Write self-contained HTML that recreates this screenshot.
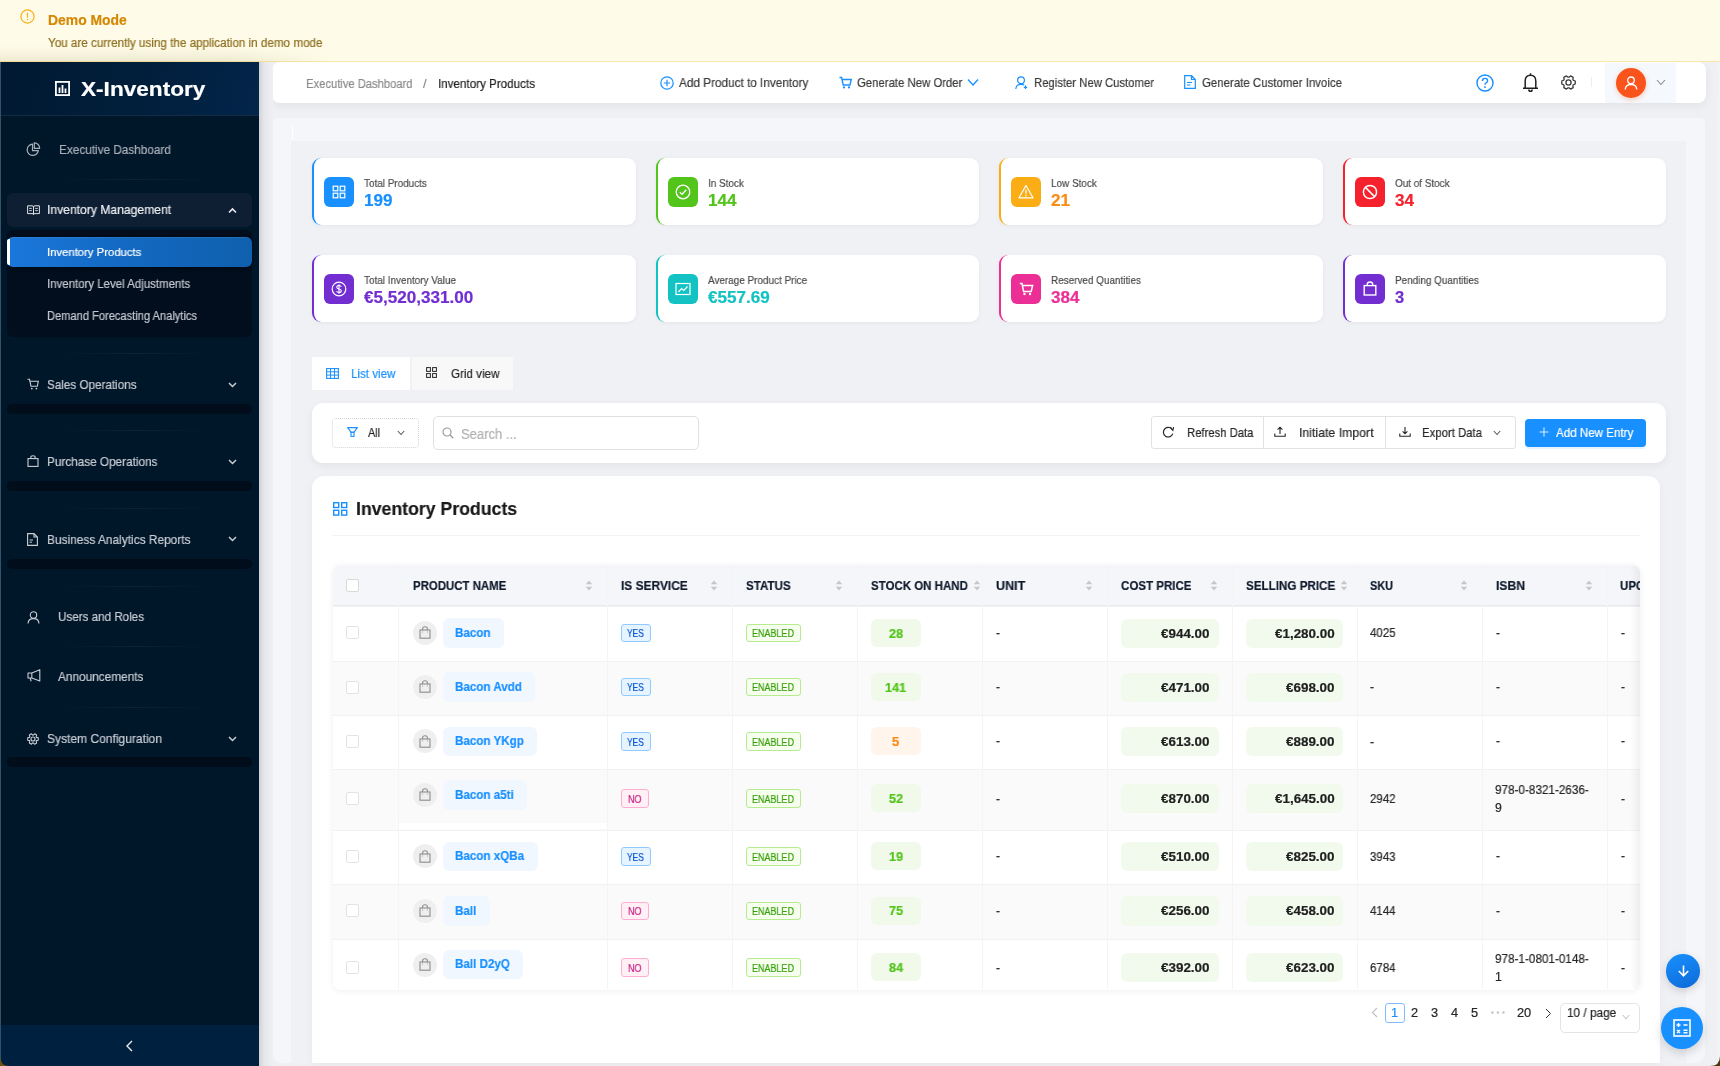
<!DOCTYPE html>
<html><head><meta charset="utf-8"><title>X-Inventory</title>
<style>
html,body{margin:0;padding:0;width:1720px;height:1066px;overflow:hidden;background:#eef0f3;}
#root{position:relative;width:1720px;height:1066px;overflow:hidden;font-family:"Liberation Sans",sans-serif;}
.t{position:absolute;white-space:nowrap;will-change:transform;-webkit-text-stroke:0.2px currentColor;font-family:"Liberation Sans",sans-serif;}
.b{position:absolute;}
.i{position:absolute;overflow:visible;}
</style></head><body><div id="root">
<div class="b" style="left:0px;top:0px;width:1720px;height:1066px;background:#eff0f4;"></div>
<div class="b" style="left:1718px;top:62px;width:2px;height:1004px;background:#f3f3f4;"></div>
<div class="b" style="left:272px;top:118px;width:1433px;height:945px;background:#f5f6fa;border-radius:5px 5px 10px 10px;"></div>
<div class="b" style="left:291px;top:141px;width:1395px;height:922px;background:#f0f1f5;"></div>
<div class="b" style="left:292px;top:125px;width:1px;height:15px;background:#ffffff;"></div>
<div class="b" style="left:272px;top:62px;width:1434px;height:41px;background:#fff;border-radius:8px;box-shadow:0 3px 10px rgba(0,0,0,0.06);"></div>
<div class="t" style="left:305.50px;top:76.50px;font-size:13px;line-height:13px;transform:scaleX(0.8619);transform-origin:0 0;color:#8a8a8a;">Executive Dashboard</div>
<div class="t" style="left:423.00px;top:76.50px;font-size:13px;line-height:13px;color:#8a8a8a;">/</div>
<div class="t" style="left:438.00px;top:76.50px;font-size:13px;line-height:13px;transform:scaleX(0.8947);transform-origin:0 0;color:#1f1f1f;">Inventory Products</div>
<svg class="i" style="left:660px;top:76px;" width="14" height="14" viewBox="0 0 14 14"><circle cx="7" cy="7" r="6.2" fill="none" stroke="#1890ff" stroke-width="1.2"/><path d="M7 3.8 V10.2 M3.8 7 H10.2" stroke="#1890ff" stroke-width="1.2"/></svg>
<div class="t" style="left:678.70px;top:76.40px;font-size:13px;line-height:13px;transform:scaleX(0.9045);transform-origin:0 0;color:#3a3a3a;">Add Product to Inventory</div>
<svg class="i" style="left:839px;top:76px;" width="13" height="13" viewBox="0 0 13 13"><path d="M0.5 1.5 H2.6 L4.2 9 H11 L12.2 3.5 H3.2" fill="none" stroke="#1890ff" stroke-width="1.4"/><circle cx="5" cy="11.4" r="1.1" fill="#1890ff"/><circle cx="10" cy="11.4" r="1.1" fill="#1890ff"/></svg>
<div class="t" style="left:856.50px;top:76.40px;font-size:13px;line-height:13px;transform:scaleX(0.8737);transform-origin:0 0;color:#3a3a3a;">Generate New Order</div>
<svg class="i" style="left:967px;top:78px;" width="12" height="9" viewBox="0 0 12 9"><path d="M1 1.5 L6 7 L11 1.5" fill="none" stroke="#1890ff" stroke-width="1.3"/></svg>
<svg class="i" style="left:1015px;top:76px;" width="13" height="14" viewBox="0 0 13 14"><circle cx="6" cy="4.2" r="3.4" fill="none" stroke="#1890ff" stroke-width="1.2"/><path d="M0.8 13 Q1 8.3 6 8.3 Q8 8.3 9.2 9" fill="none" stroke="#1890ff" stroke-width="1.2"/><path d="M10.5 9.5 V13 M8.8 11.3 H12.2" stroke="#1890ff" stroke-width="1.2"/></svg>
<div class="t" style="left:1033.70px;top:76.40px;font-size:13px;line-height:13px;transform:scaleX(0.8696);transform-origin:0 0;color:#3a3a3a;">Register New Customer</div>
<svg class="i" style="left:1184px;top:75px;" width="12" height="14" viewBox="0 0 12 14"><path d="M0.7 0.7 H7.5 L11.3 4.5 V13.3 H0.7 Z M7.5 0.7 V4.5 H11.3" fill="none" stroke="#1890ff" stroke-width="1.2"/><path d="M3 7.5 H8 M3 10 H6.5" stroke="#1890ff" stroke-width="1.1"/></svg>
<div class="t" style="left:1202.00px;top:76.40px;font-size:13px;line-height:13px;transform:scaleX(0.8806);transform-origin:0 0;color:#3a3a3a;">Generate Customer Invoice</div>
<svg class="i" style="left:1476px;top:74px;" width="18" height="18" viewBox="0 0 18 18"><circle cx="9" cy="9" r="8" fill="none" stroke="#1890ff" stroke-width="1.4"/><path d="M6.4 7 Q6.4 4.4 9 4.4 Q11.6 4.4 11.6 6.8 Q11.6 8.3 9.8 9.1 Q9 9.5 9 10.8" fill="none" stroke="#1890ff" stroke-width="1.4"/><circle cx="9" cy="13.2" r="0.9" fill="#1890ff"/></svg>
<svg class="i" style="left:1522px;top:72px;" width="17" height="21" viewBox="0 0 17 21"><path d="M8.5 1.2 V2.6 M3.2 16 V9 Q3.2 3.2 8.5 3.2 Q13.8 3.2 13.8 9 V16 M1 16.3 H16 M6.8 17.5 Q6.8 19.3 8.5 19.3 Q10.2 19.3 10.2 17.5" fill="none" stroke="#1f1f1f" stroke-width="1.5"/></svg>
<svg class="i" style="left:1561px;top:74.5px;" width="15" height="15" viewBox="0 0 15 15"><path d="M12.27 5.19 L14.23 5.99 L14.23 9.01 L12.27 9.81 L11.88 10.48 L12.17 12.58 L9.56 14.08 L7.89 12.79 L7.11 12.79 L5.44 14.08 L2.83 12.58 L3.12 10.48 L2.73 9.81 L0.77 9.01 L0.77 5.99 L2.73 5.19 L3.12 4.52 L2.83 2.42 L5.44 0.92 L7.11 2.21 L7.89 2.21 L9.56 0.92 L12.17 2.42 L11.88 4.52Z" fill="none" stroke="#3a3a3a" stroke-width="1.3" stroke-linejoin="round"/><circle cx="7.5" cy="7.5" r="2.55" fill="none" stroke="#3a3a3a" stroke-width="1.3"/></svg>
<div class="b" style="left:1591px;top:77px;width:1px;height:10px;background:#eeeeee;"></div>
<div class="b" style="left:1605px;top:63px;width:71px;height:40px;background:#f5f8fc;"></div>
<div class="b" style="left:1616px;top:68px;width:30px;height:30px;background:#fa541c;border-radius:50%;box-shadow:0 2px 5px rgba(250,84,28,0.25);"></div>
<svg class="i" style="left:1623px;top:75px;" width="16" height="16" viewBox="0 0 16 16"><circle cx="8" cy="5.3" r="3.3" fill="none" stroke="#fff" stroke-width="1.3"/><path d="M2.2 14.5 Q2.5 9.5 8 9.5 Q13.5 9.5 13.8 14.5" fill="none" stroke="#fff" stroke-width="1.3"/></svg>
<svg class="i" style="left:1656px;top:79px;" width="10" height="7" viewBox="0 0 10 7"><path d="M1 1 L5 5.5 L9 1" fill="none" stroke="#8c8c8c" stroke-width="1.1"/></svg>
<div class="b" style="left:312px;top:157.5px;width:323.5px;height:67px;background:#fff;border-radius:9px;border-left:2.5px solid #1890ff;box-sizing:border-box;box-shadow:0 1px 4px rgba(0,0,0,0.05);"></div>
<div class="b" style="left:324px;top:176.5px;width:30px;height:30px;background:#1890ff;border-radius:6px;"></div>
<svg class="i" style="left:332.0px;top:184.5px;" width="14" height="14" viewBox="0 0 14 14"><rect x="1.2" y="1.2" width="4.6" height="4.6" fill="none" stroke="#ffffff" stroke-width="1.2"/><rect x="1.2" y="8.2" width="4.6" height="4.6" fill="none" stroke="#ffffff" stroke-width="1.2"/><rect x="8.2" y="1.2" width="4.6" height="4.6" fill="none" stroke="#ffffff" stroke-width="1.2"/><rect x="8.2" y="8.2" width="4.6" height="4.6" fill="none" stroke="#ffffff" stroke-width="1.2"/></svg>
<div class="t" style="left:364.00px;top:177.50px;font-size:11.8px;line-height:11.8px;transform:scaleX(0.8415);transform-origin:0 0;color:#4a4a4a;">Total Products</div>
<div class="t" style="left:364.00px;top:191.50px;font-size:16.5px;line-height:16.5px;font-weight:700;transform:scaleX(1.0352);transform-origin:0 0;color:#1890ff;">199</div>
<div class="b" style="left:655.5px;top:157.5px;width:323.5px;height:67px;background:#fff;border-radius:9px;border-left:2.5px solid #52c41a;box-sizing:border-box;box-shadow:0 1px 4px rgba(0,0,0,0.05);"></div>
<div class="b" style="left:667.5px;top:176.5px;width:30px;height:30px;background:#52c41a;border-radius:6px;"></div>
<svg class="i" style="left:674.5px;top:183.5px;" width="16" height="16" viewBox="0 0 16 16"><circle cx="8" cy="8" r="6.8" fill="none" stroke="#ffffff" stroke-width="1.3"/><path d="M4.8 8.2 L7.1 10.4 L11.2 5.8" fill="none" stroke="#ffffff" stroke-width="1.3"/></svg>
<div class="t" style="left:707.50px;top:177.50px;font-size:11.8px;line-height:11.8px;transform:scaleX(0.8415);transform-origin:0 0;color:#4a4a4a;">In Stock</div>
<div class="t" style="left:707.50px;top:191.50px;font-size:16.5px;line-height:16.5px;font-weight:700;transform:scaleX(1.0352);transform-origin:0 0;color:#52c41a;">144</div>
<div class="b" style="left:999px;top:157.5px;width:323.5px;height:67px;background:#fff;border-radius:9px;border-left:2.5px solid #faad14;box-sizing:border-box;box-shadow:0 1px 4px rgba(0,0,0,0.05);"></div>
<div class="b" style="left:1011px;top:176.5px;width:30px;height:30px;background:#faad14;border-radius:6px;"></div>
<svg class="i" style="left:1018.0px;top:184.0px;" width="16" height="15" viewBox="0 0 16 15"><path d="M8 1.5 L15 13.8 H1 Z" fill="none" stroke="#ffffff" stroke-width="1.2" stroke-linejoin="round"/><path d="M8 5.8 V9.8" stroke="#ffffff" stroke-width="1.3"/><circle cx="8" cy="11.6" r="0.8" fill="#ffffff"/></svg>
<div class="t" style="left:1051.00px;top:177.50px;font-size:11.8px;line-height:11.8px;transform:scaleX(0.8415);transform-origin:0 0;color:#4a4a4a;">Low Stock</div>
<div class="t" style="left:1051.00px;top:191.50px;font-size:16.5px;line-height:16.5px;font-weight:700;transform:scaleX(1.0352);transform-origin:0 0;color:#fa8c16;">21</div>
<div class="b" style="left:1342.5px;top:157.5px;width:323.5px;height:67px;background:#fff;border-radius:9px;border-left:2.5px solid #f5222d;box-sizing:border-box;box-shadow:0 1px 4px rgba(0,0,0,0.05);"></div>
<div class="b" style="left:1354.5px;top:176.5px;width:30px;height:30px;background:#f5222d;border-radius:6px;"></div>
<svg class="i" style="left:1361.5px;top:183.5px;" width="16" height="16" viewBox="0 0 16 16"><circle cx="8" cy="8" r="6.6" fill="none" stroke="#ffffff" stroke-width="1.5"/><path d="M3.4 3.4 L12.6 12.6" stroke="#ffffff" stroke-width="1.5"/></svg>
<div class="t" style="left:1394.50px;top:177.50px;font-size:11.8px;line-height:11.8px;transform:scaleX(0.8415);transform-origin:0 0;color:#4a4a4a;">Out of Stock</div>
<div class="t" style="left:1394.50px;top:191.50px;font-size:16.5px;line-height:16.5px;font-weight:700;transform:scaleX(1.0352);transform-origin:0 0;color:#f5222d;">34</div>
<div class="b" style="left:312px;top:254.5px;width:323.5px;height:67px;background:#fff;border-radius:9px;border-left:2.5px solid #722ed1;box-sizing:border-box;box-shadow:0 1px 4px rgba(0,0,0,0.05);"></div>
<div class="b" style="left:324px;top:273.5px;width:30px;height:30px;background:#722ed1;border-radius:6px;"></div>
<svg class="i" style="left:331.0px;top:280.5px;" width="16" height="16" viewBox="0 0 16 16"><circle cx="8" cy="8" r="6.8" fill="none" stroke="#ffffff" stroke-width="1.2"/><path d="M10.3 5.8 Q9.8 4.5 8 4.5 Q5.8 4.5 5.8 6.2 Q5.8 7.5 8 8 Q10.3 8.5 10.3 9.9 Q10.3 11.5 8 11.5 Q6 11.5 5.6 10.1 M8 3.2 V12.8" fill="none" stroke="#ffffff" stroke-width="1.1"/></svg>
<div class="t" style="left:364.00px;top:274.50px;font-size:11.8px;line-height:11.8px;transform:scaleX(0.8415);transform-origin:0 0;color:#4a4a4a;">Total Inventory Value</div>
<div class="t" style="left:364.00px;top:288.50px;font-size:16.5px;line-height:16.5px;font-weight:700;transform:scaleX(1.0352);transform-origin:0 0;color:#722ed1;">€5,520,331.00</div>
<div class="b" style="left:655.5px;top:254.5px;width:323.5px;height:67px;background:#fff;border-radius:9px;border-left:2.5px solid #13c2c2;box-sizing:border-box;box-shadow:0 1px 4px rgba(0,0,0,0.05);"></div>
<div class="b" style="left:667.5px;top:273.5px;width:30px;height:30px;background:#13c2c2;border-radius:6px;"></div>
<svg class="i" style="left:674.5px;top:281.5px;" width="16" height="14" viewBox="0 0 16 14"><rect x="1" y="1.5" width="14" height="11" fill="none" stroke="#ffffff" stroke-width="1.2"/><path d="M3.5 10 L6.5 6.5 L8.8 8.5 L12.5 4.5" fill="none" stroke="#ffffff" stroke-width="1.2"/></svg>
<div class="t" style="left:707.50px;top:274.50px;font-size:11.8px;line-height:11.8px;transform:scaleX(0.8415);transform-origin:0 0;color:#4a4a4a;">Average Product Price</div>
<div class="t" style="left:707.50px;top:288.50px;font-size:16.5px;line-height:16.5px;font-weight:700;transform:scaleX(1.0352);transform-origin:0 0;color:#13c2c2;">€557.69</div>
<div class="b" style="left:999px;top:254.5px;width:323.5px;height:67px;background:#fff;border-radius:9px;border-left:2.5px solid #eb2f96;box-sizing:border-box;box-shadow:0 1px 4px rgba(0,0,0,0.05);"></div>
<div class="b" style="left:1011px;top:273.5px;width:30px;height:30px;background:#eb2f96;border-radius:6px;"></div>
<svg class="i" style="left:1018.5px;top:281.5px;" width="15" height="14" viewBox="0 0 15 14"><path d="M0.8 1.6 H3 L4.6 9.4 H12.2 L13.6 3.6 H3.6" fill="none" stroke="#ffffff" stroke-width="1.5"/><circle cx="5.5" cy="12" r="1.2" fill="#ffffff"/><circle cx="11" cy="12" r="1.2" fill="#ffffff"/></svg>
<div class="t" style="left:1051.00px;top:274.50px;font-size:11.8px;line-height:11.8px;transform:scaleX(0.8415);transform-origin:0 0;color:#4a4a4a;">Reserved Quantities</div>
<div class="t" style="left:1051.00px;top:288.50px;font-size:16.5px;line-height:16.5px;font-weight:700;transform:scaleX(1.0352);transform-origin:0 0;color:#eb2f96;">384</div>
<div class="b" style="left:1342.5px;top:254.5px;width:323.5px;height:67px;background:#fff;border-radius:9px;border-left:2.5px solid #722ed1;box-sizing:border-box;box-shadow:0 1px 4px rgba(0,0,0,0.05);"></div>
<div class="b" style="left:1354.5px;top:273.5px;width:30px;height:30px;background:#722ed1;border-radius:6px;"></div>
<svg class="i" style="left:1362.5px;top:281.0px;" width="14" height="15" viewBox="0 0 14 15"><rect x="1.2" y="4.6" width="11.6" height="9.4" fill="none" stroke="#ffffff" stroke-width="1.4"/><path d="M4.3 4.6 V3.2 Q4.3 1 7 1 Q9.7 1 9.7 3.2 V4.6" fill="none" stroke="#ffffff" stroke-width="1.3"/></svg>
<div class="t" style="left:1394.50px;top:274.50px;font-size:11.8px;line-height:11.8px;transform:scaleX(0.8415);transform-origin:0 0;color:#4a4a4a;">Pending Quantities</div>
<div class="t" style="left:1394.50px;top:288.50px;font-size:16.5px;line-height:16.5px;font-weight:700;color:#722ed1;">3</div>
<div class="b" style="left:312px;top:357px;width:97.5px;height:32.5px;background:#ffffff;"></div>
<div class="b" style="left:412px;top:357px;width:100.5px;height:32.5px;background:#f8f8f9;"></div>
<svg class="i" style="left:325.5px;top:367.5px;" width="13" height="11" viewBox="0 0 13 11"><rect x="0.6" y="0.6" width="11.8" height="9.8" fill="none" stroke="#1890ff" stroke-width="1.1"/><path d="M0.6 3.8 H12.4 M0.6 7.1 H12.4 M4.5 0.6 V10.4 M8.5 0.6 V10.4" stroke="#1890ff" stroke-width="1"/></svg>
<div class="t" style="left:351.25px;top:366.50px;font-size:13.2px;line-height:13.2px;transform:scaleX(0.8791);transform-origin:0 0;color:#1890ff;">List view</div>
<svg class="i" style="left:426px;top:367px;" width="11" height="11" viewBox="0 0 11 11"><rect x="0.6" y="0.6" width="3.8" height="3.8" fill="none" stroke="#262626" stroke-width="1"/><rect x="0.6" y="6.6" width="3.8" height="3.8" fill="none" stroke="#262626" stroke-width="1"/><rect x="6.6" y="0.6" width="3.8" height="3.8" fill="none" stroke="#262626" stroke-width="1"/><rect x="6.6" y="6.6" width="3.8" height="3.8" fill="none" stroke="#262626" stroke-width="1"/></svg>
<div class="t" style="left:450.75px;top:366.50px;font-size:13.2px;line-height:13.2px;transform:scaleX(0.8811);transform-origin:0 0;color:#262626;">Grid view</div>
<div class="b" style="left:312px;top:403px;width:1354px;height:60px;background:#fff;border-radius:11px;box-shadow:0 3px 10px rgba(0,0,0,0.06);"></div>
<div class="b" style="left:331.5px;top:418px;width:87.5px;height:30px;border:1px dotted #d6d6d6;border-radius:4px;box-sizing:border-box;"></div>
<svg class="i" style="left:346.5px;top:427px;" width="11" height="10" viewBox="0 0 11 10"><path d="M0.6 0.6 H10.4 L7 5.2 H4 Z" fill="none" stroke="#1890ff" stroke-width="1.1" stroke-linejoin="round"/><rect x="4" y="5.2" width="3" height="4.2" fill="none" stroke="#1890ff" stroke-width="1.1"/></svg>
<div class="t" style="left:367.50px;top:426.20px;font-size:13px;line-height:13px;transform:scaleX(0.8316);transform-origin:0 0;color:#262626;">All</div>
<svg class="i" style="left:397px;top:429.5px;" width="8" height="6" viewBox="0 0 8 6"><path d="M0.8 1 L4 4.5 L7.2 1" fill="none" stroke="#595959" stroke-width="1.1"/></svg>
<div class="b" style="left:432.5px;top:416px;width:266.5px;height:33.5px;border:1px solid #e0e0e0;border-radius:5px;box-sizing:border-box;background:#fff;"></div>
<svg class="i" style="left:442px;top:427px;" width="12" height="12" viewBox="0 0 12 12"><circle cx="5" cy="5" r="4" fill="none" stroke="#9a9a9a" stroke-width="1.2"/><path d="M8 8 L11.3 11.3" stroke="#9a9a9a" stroke-width="1.3"/></svg>
<div class="t" style="left:461.25px;top:427.00px;font-size:14px;line-height:14px;transform:scaleX(0.9304);transform-origin:0 0;color:#b0b0b0;">Search ...</div>
<div class="b" style="left:1151px;top:416px;width:364.5px;height:33px;border:1px solid #e2e2e2;border-radius:3px;box-sizing:border-box;"></div>
<div class="b" style="left:1263px;top:416px;width:1px;height:33px;background:#e2e2e2;"></div>
<div class="b" style="left:1384.5px;top:416px;width:1px;height:33px;background:#e2e2e2;"></div>
<svg class="i" style="left:1161.5px;top:426px;" width="12" height="12" viewBox="0 0 12 12"><path d="M10.6 4.2 A4.8 4.8 0 1 0 10.8 7.6" fill="none" stroke="#262626" stroke-width="1.2"/><path d="M8.3 1.2 L10.9 4.3 L11.6 1" fill="none" stroke="#262626" stroke-width="1.1"/></svg>
<div class="t" style="left:1186.50px;top:425.90px;font-size:13px;line-height:13px;transform:scaleX(0.8677);transform-origin:0 0;color:#262626;">Refresh Data</div>
<svg class="i" style="left:1273.5px;top:426px;" width="12" height="11" viewBox="0 0 12 11"><path d="M6 8 V1.2 M3.6 3.6 L6 1.2 L8.4 3.6 M0.8 7.5 V10.2 H11.2 V7.5" fill="none" stroke="#262626" stroke-width="1.1"/></svg>
<div class="t" style="left:1299.00px;top:425.90px;font-size:13px;line-height:13px;transform:scaleX(0.9469);transform-origin:0 0;color:#262626;">Initiate Import</div>
<svg class="i" style="left:1398.5px;top:426px;" width="12" height="11" viewBox="0 0 12 11"><path d="M6 1 V7.8 M3.6 5.4 L6 7.8 L8.4 5.4 M0.8 7.5 V10.2 H11.2 V7.5" fill="none" stroke="#262626" stroke-width="1.1"/></svg>
<div class="t" style="left:1421.50px;top:425.90px;font-size:13px;line-height:13px;transform:scaleX(0.8733);transform-origin:0 0;color:#262626;">Export Data</div>
<svg class="i" style="left:1493px;top:430px;" width="8" height="6" viewBox="0 0 8 6"><path d="M0.8 1 L4 4.5 L7.2 1" fill="none" stroke="#595959" stroke-width="1.1"/></svg>
<div class="b" style="left:1525px;top:418.5px;width:121px;height:28.5px;background:#1890ff;border-radius:4px;box-shadow:0 2px 0 rgba(5,145,255,0.1);"></div>
<svg class="i" style="left:1539px;top:427px;" width="10" height="10" viewBox="0 0 10 10"><path d="M5 0.5 V9.5 M0.5 5 H9.5" stroke="#cfe6ff" stroke-width="1.2"/></svg>
<div class="t" style="left:1555.70px;top:425.90px;font-size:13px;line-height:13px;transform:scaleX(0.8915);transform-origin:0 0;color:#ffffff;">Add New Entry</div>
<div class="b" style="left:312px;top:476px;width:1348px;height:587px;background:#fff;border-radius:12px 12px 0 0;box-shadow:0 2px 8px rgba(0,0,0,0.04);"></div>
<svg class="i" style="left:333px;top:502px;" width="15" height="14" viewBox="0 0 15 14"><rect x="0.7" y="0.7" width="5" height="4.8" fill="none" stroke="#1890ff" stroke-width="1.4"/><rect x="0.7" y="8.3" width="5" height="4.8" fill="none" stroke="#1890ff" stroke-width="1.4"/><rect x="8.7" y="0.7" width="5" height="4.8" fill="none" stroke="#1890ff" stroke-width="1.4"/><rect x="8.7" y="8.3" width="5" height="4.8" fill="none" stroke="#1890ff" stroke-width="1.4"/></svg>
<div class="t" style="left:355.50px;top:499.50px;font-size:18.6px;line-height:18.6px;font-weight:700;transform:scaleX(0.9511);transform-origin:0 0;color:#1a1a1a;">Inventory Products</div>
<div class="b" style="left:332px;top:534.5px;width:1308px;height:1px;background:#f3f3f3;"></div>
<div class="b" style="left:332.5px;top:565px;width:1307px;height:424.5px;border-radius:8px;overflow:hidden;box-shadow:0 1px 6px rgba(0,0,0,0.07);background:#fff;">
<div style="position:absolute;left:0;top:0;width:1307px;height:40px;background:#f5f6fa;border-bottom:1.5px solid #e9eaee;"></div>
<div style="position:absolute;left:0;top:41.0px;width:1307px;height:55.0px;background:#ffffff;border-top:1px solid #f2f2f2;box-sizing:border-box;"></div>
<div style="position:absolute;left:0;top:96.0px;width:1307px;height:54.4px;background:#fafafa;border-top:1px solid #f2f2f2;box-sizing:border-box;"></div>
<div style="position:absolute;left:0;top:150.4px;width:1307px;height:53.9px;background:#ffffff;border-top:1px solid #f2f2f2;box-sizing:border-box;"></div>
<div style="position:absolute;left:0;top:204.3px;width:1307px;height:61.1px;background:#fafafa;border-top:1px solid #f2f2f2;box-sizing:border-box;"></div>
<div style="position:absolute;left:0;top:265.4px;width:1307px;height:54.0px;background:#ffffff;border-top:1px solid #f2f2f2;box-sizing:border-box;"></div>
<div style="position:absolute;left:0;top:319.4px;width:1307px;height:54.6px;background:#fafafa;border-top:1px solid #f2f2f2;box-sizing:border-box;"></div>
<div style="position:absolute;left:0;top:374.0px;width:1307px;height:59.0px;background:#ffffff;border-top:1px solid #f2f2f2;box-sizing:border-box;"></div>
<div style="position:absolute;left:65.8px;top:0;width:1px;height:424px;background:#f4f4f4;"></div>
<div style="position:absolute;left:274.5px;top:0;width:1px;height:424px;background:#f4f4f4;"></div>
<div style="position:absolute;left:399.5px;top:0;width:1px;height:424px;background:#f4f4f4;"></div>
<div style="position:absolute;left:524.5px;top:0;width:1px;height:424px;background:#f4f4f4;"></div>
<div style="position:absolute;left:649.5px;top:0;width:1px;height:424px;background:#f4f4f4;"></div>
<div style="position:absolute;left:774.5px;top:0;width:1px;height:424px;background:#f4f4f4;"></div>
<div style="position:absolute;left:899.5px;top:0;width:1px;height:424px;background:#f4f4f4;"></div>
<div style="position:absolute;left:1024.5px;top:0;width:1px;height:424px;background:#f4f4f4;"></div>
<div style="position:absolute;left:1149.5px;top:0;width:1px;height:424px;background:#f4f4f4;"></div>
<div style="position:absolute;left:1274.5px;top:0;width:1px;height:424px;background:#f4f4f4;"></div>
<div style="position:absolute;left:66.5px;top:258px;width:208px;height:6px;background:#fff;"></div>
<div style="position:absolute;right:0;top:0;width:10px;height:424px;background:linear-gradient(90deg,rgba(0,0,0,0),rgba(0,0,0,0.05));"></div>
</div>
<div class="b" style="left:346.25px;top:578.5px;width:13px;height:13px;border:1px solid #d9d9d9;border-radius:2px;box-sizing:border-box;background:#fff;"></div>
<div class="t" style="left:412.50px;top:579.00px;font-size:13px;line-height:13px;font-weight:700;transform:scaleX(0.8785);transform-origin:0 0;color:#0f1a2b;">PRODUCT NAME</div>
<svg class="i" style="left:585px;top:580.0px;" width="8" height="11" viewBox="0 0 8 11"><path d="M4 0.5 L7.3 4.2 H0.7 Z" fill="#c7c7c7"/><path d="M4 10.5 L7.3 6.8 H0.7 Z" fill="#c7c7c7"/></svg>
<div class="t" style="left:620.75px;top:579.00px;font-size:13px;line-height:13px;font-weight:700;transform:scaleX(0.9177);transform-origin:0 0;color:#0f1a2b;">IS SERVICE</div>
<svg class="i" style="left:710px;top:580.0px;" width="8" height="11" viewBox="0 0 8 11"><path d="M4 0.5 L7.3 4.2 H0.7 Z" fill="#c7c7c7"/><path d="M4 10.5 L7.3 6.8 H0.7 Z" fill="#c7c7c7"/></svg>
<div class="t" style="left:745.50px;top:579.00px;font-size:13px;line-height:13px;font-weight:700;transform:scaleX(0.8911);transform-origin:0 0;color:#0f1a2b;">STATUS</div>
<svg class="i" style="left:835px;top:580.0px;" width="8" height="11" viewBox="0 0 8 11"><path d="M4 0.5 L7.3 4.2 H0.7 Z" fill="#c7c7c7"/><path d="M4 10.5 L7.3 6.8 H0.7 Z" fill="#c7c7c7"/></svg>
<div class="t" style="left:870.70px;top:579.00px;font-size:13px;line-height:13px;font-weight:700;transform:scaleX(0.8838);transform-origin:0 0;color:#0f1a2b;">STOCK ON HAND</div>
<svg class="i" style="left:972.5px;top:580.0px;" width="8" height="11" viewBox="0 0 8 11"><path d="M4 0.5 L7.3 4.2 H0.7 Z" fill="#c7c7c7"/><path d="M4 10.5 L7.3 6.8 H0.7 Z" fill="#c7c7c7"/></svg>
<div class="t" style="left:995.80px;top:579.00px;font-size:13px;line-height:13px;font-weight:700;transform:scaleX(0.9620);transform-origin:0 0;color:#0f1a2b;">UNIT</div>
<svg class="i" style="left:1085px;top:580.0px;" width="8" height="11" viewBox="0 0 8 11"><path d="M4 0.5 L7.3 4.2 H0.7 Z" fill="#c7c7c7"/><path d="M4 10.5 L7.3 6.8 H0.7 Z" fill="#c7c7c7"/></svg>
<div class="t" style="left:1120.50px;top:579.00px;font-size:13px;line-height:13px;font-weight:700;transform:scaleX(0.8863);transform-origin:0 0;color:#0f1a2b;">COST PRICE</div>
<svg class="i" style="left:1210px;top:580.0px;" width="8" height="11" viewBox="0 0 8 11"><path d="M4 0.5 L7.3 4.2 H0.7 Z" fill="#c7c7c7"/><path d="M4 10.5 L7.3 6.8 H0.7 Z" fill="#c7c7c7"/></svg>
<div class="t" style="left:1245.50px;top:579.00px;font-size:13px;line-height:13px;font-weight:700;transform:scaleX(0.8956);transform-origin:0 0;color:#0f1a2b;">SELLING PRICE</div>
<svg class="i" style="left:1340px;top:580.0px;" width="8" height="11" viewBox="0 0 8 11"><path d="M4 0.5 L7.3 4.2 H0.7 Z" fill="#c7c7c7"/><path d="M4 10.5 L7.3 6.8 H0.7 Z" fill="#c7c7c7"/></svg>
<div class="t" style="left:1370.40px;top:579.00px;font-size:13px;line-height:13px;font-weight:700;transform:scaleX(0.8385);transform-origin:0 0;color:#0f1a2b;">SKU</div>
<svg class="i" style="left:1460px;top:580.0px;" width="8" height="11" viewBox="0 0 8 11"><path d="M4 0.5 L7.3 4.2 H0.7 Z" fill="#c7c7c7"/><path d="M4 10.5 L7.3 6.8 H0.7 Z" fill="#c7c7c7"/></svg>
<div class="t" style="left:1495.50px;top:579.00px;font-size:13px;line-height:13px;font-weight:700;transform:scaleX(0.9334);transform-origin:0 0;color:#0f1a2b;">ISBN</div>
<svg class="i" style="left:1585px;top:580.0px;" width="8" height="11" viewBox="0 0 8 11"><path d="M4 0.5 L7.3 4.2 H0.7 Z" fill="#c7c7c7"/><path d="M4 10.5 L7.3 6.8 H0.7 Z" fill="#c7c7c7"/></svg>
<div class="b" style="left:1608px;top:570px;width:31.5px;height:30px;overflow:hidden;"><div style="position:absolute;left:-1608px;top:-570px;width:1720px;height:1066px;"><div class="t" style="left:1620.00px;top:579.00px;font-size:13px;line-height:13px;font-weight:700;transform:scaleX(0.8808);transform-origin:0 0;color:#0f1a2b;">UPC</div>
</div></div>
<div class="b" style="left:346.25px;top:626.4px;width:13px;height:13px;border:1px solid #e3e3e3;border-radius:2px;box-sizing:border-box;background:#fff;"></div>
<div class="b" style="left:412.5px;top:620.9px;width:24px;height:24px;background:#efefef;border-radius:50%;"></div>
<svg class="i" style="left:418.5px;top:626.1px;" width="12" height="13" viewBox="0 0 12 13"><rect x="1" y="4" width="10" height="8.2" fill="none" stroke="#8c8c8c" stroke-width="1.1"/><path d="M3.6 4 V2.8 Q3.6 0.8 6 0.8 Q8.4 0.8 8.4 2.8 V4" fill="none" stroke="#8c8c8c" stroke-width="1.1"/><path d="M3.6 5.6 V6.4 M8.4 5.6 V6.4" stroke="#8c8c8c" stroke-width="1"/></svg>
<div class="b" style="left:442.5px;top:618.1999999999999px;width:61.4991px;height:29.5px;background:#f1f7ff;border-radius:6px;"></div>
<div class="t" style="left:455.30px;top:625.70px;font-size:13.5px;line-height:13.5px;font-weight:700;transform:scaleX(0.8607);transform-origin:0 0;color:#1890ff;">Bacon</div>
<div class="b" style="left:621px;top:623.6999999999999px;width:30.2px;height:18.5px;background:#e6f4ff;border:1px solid #91caff;border-radius:3px;box-sizing:border-box;"></div>
<div class="t" style="left:627.40px;top:628.20px;font-size:11px;line-height:11px;transform:scaleX(0.7636);transform-origin:0 0;color:#0958d9;">YES</div>
<div class="b" style="left:746px;top:623.6999999999999px;width:54.7px;height:18.5px;background:#f6ffed;border:1px solid #b7eb8f;border-radius:3px;box-sizing:border-box;"></div>
<div class="t" style="left:752.30px;top:628.20px;font-size:11px;line-height:11px;transform:scaleX(0.8176);transform-origin:0 0;color:#389e0d;">ENABLED</div>
<div class="b" style="left:871px;top:618.6999999999999px;width:50px;height:28px;background:#f0f9ea;border-radius:6px;"></div>
<div class="t" style="left:889.01px;top:626.50px;font-size:13px;line-height:13px;font-weight:700;transform:scaleX(0.9692);transform-origin:0 0;color:#52c41a;">28</div>
<div class="t" style="left:995.50px;top:626.90px;font-size:12px;line-height:12px;color:#262626;">-</div>
<div class="b" style="left:1120.5px;top:618.5px;width:98px;height:29.4px;background:#f2faed;border-radius:6px;"></div>
<div class="t" style="left:1161.19px;top:626.50px;font-size:13px;line-height:13px;font-weight:700;transform:scaleX(1.0323);transform-origin:0 0;color:#1f1f1f;">€944.00</div>
<div class="b" style="left:1245.5px;top:618.5px;width:97.7px;height:29.4px;background:#f2faed;border-radius:6px;"></div>
<div class="t" style="left:1275.18px;top:626.50px;font-size:13px;line-height:13px;font-weight:700;transform:scaleX(1.0323);transform-origin:0 0;color:#1f1f1f;">€1,280.00</div>
<div class="t" style="left:1370.40px;top:627.20px;font-size:12.3px;line-height:12.3px;transform:scaleX(0.9350);transform-origin:0 0;color:#262626;">4025</div>
<div class="t" style="left:1495.50px;top:626.90px;font-size:12px;line-height:12px;color:#262626;">-</div>
<div class="t" style="left:1620.50px;top:626.90px;font-size:12px;line-height:12px;color:#262626;">-</div>
<div class="b" style="left:346.25px;top:680.6px;width:13px;height:13px;border:1px solid #e3e3e3;border-radius:2px;box-sizing:border-box;background:#fff;"></div>
<div class="b" style="left:412.5px;top:675.1px;width:24px;height:24px;background:#efefef;border-radius:50%;"></div>
<svg class="i" style="left:418.5px;top:680.3000000000001px;" width="12" height="13" viewBox="0 0 12 13"><rect x="1" y="4" width="10" height="8.2" fill="none" stroke="#8c8c8c" stroke-width="1.1"/><path d="M3.6 4 V2.8 Q3.6 0.8 6 0.8 Q8.4 0.8 8.4 2.8 V4" fill="none" stroke="#8c8c8c" stroke-width="1.1"/><path d="M3.6 5.6 V6.4 M8.4 5.6 V6.4" stroke="#8c8c8c" stroke-width="1"/></svg>
<div class="b" style="left:442.5px;top:672.4px;width:92.9312px;height:29.5px;background:#f1f7ff;border-radius:6px;"></div>
<div class="t" style="left:455.30px;top:679.90px;font-size:13.5px;line-height:13.5px;font-weight:700;transform:scaleX(0.8607);transform-origin:0 0;color:#1890ff;">Bacon Avdd</div>
<div class="b" style="left:621px;top:677.9px;width:30.2px;height:18.5px;background:#e6f4ff;border:1px solid #91caff;border-radius:3px;box-sizing:border-box;"></div>
<div class="t" style="left:627.40px;top:682.40px;font-size:11px;line-height:11px;transform:scaleX(0.7636);transform-origin:0 0;color:#0958d9;">YES</div>
<div class="b" style="left:746px;top:677.9px;width:54.7px;height:18.5px;background:#f6ffed;border:1px solid #b7eb8f;border-radius:3px;box-sizing:border-box;"></div>
<div class="t" style="left:752.30px;top:682.40px;font-size:11px;line-height:11px;transform:scaleX(0.8176);transform-origin:0 0;color:#389e0d;">ENABLED</div>
<div class="b" style="left:871px;top:672.9px;width:50px;height:28px;background:#f0f9ea;border-radius:6px;"></div>
<div class="t" style="left:885.48px;top:680.70px;font-size:13px;line-height:13px;font-weight:700;transform:scaleX(0.9692);transform-origin:0 0;color:#52c41a;">141</div>
<div class="t" style="left:995.50px;top:681.10px;font-size:12px;line-height:12px;color:#262626;">-</div>
<div class="b" style="left:1120.5px;top:672.7px;width:98px;height:29.4px;background:#f2faed;border-radius:6px;"></div>
<div class="t" style="left:1161.19px;top:680.70px;font-size:13px;line-height:13px;font-weight:700;transform:scaleX(1.0323);transform-origin:0 0;color:#1f1f1f;">€471.00</div>
<div class="b" style="left:1245.5px;top:672.7px;width:97.7px;height:29.4px;background:#f2faed;border-radius:6px;"></div>
<div class="t" style="left:1286.39px;top:680.70px;font-size:13px;line-height:13px;font-weight:700;transform:scaleX(1.0323);transform-origin:0 0;color:#1f1f1f;">€698.00</div>
<div class="t" style="left:1370.40px;top:681.40px;font-size:12.3px;line-height:12.3px;color:#262626;">-</div>
<div class="t" style="left:1495.50px;top:681.10px;font-size:12px;line-height:12px;color:#262626;">-</div>
<div class="t" style="left:1620.50px;top:681.10px;font-size:12px;line-height:12px;color:#262626;">-</div>
<div class="b" style="left:346.25px;top:734.8px;width:13px;height:13px;border:1px solid #e3e3e3;border-radius:2px;box-sizing:border-box;background:#fff;"></div>
<div class="b" style="left:412.5px;top:729.3px;width:24px;height:24px;background:#efefef;border-radius:50%;"></div>
<svg class="i" style="left:418.5px;top:734.5px;" width="12" height="13" viewBox="0 0 12 13"><rect x="1" y="4" width="10" height="8.2" fill="none" stroke="#8c8c8c" stroke-width="1.1"/><path d="M3.6 4 V2.8 Q3.6 0.8 6 0.8 Q8.4 0.8 8.4 2.8 V4" fill="none" stroke="#8c8c8c" stroke-width="1.1"/><path d="M3.6 5.6 V6.4 M8.4 5.6 V6.4" stroke="#8c8c8c" stroke-width="1"/></svg>
<div class="b" style="left:442.5px;top:726.5999999999999px;width:94.8485px;height:29.5px;background:#f1f7ff;border-radius:6px;"></div>
<div class="t" style="left:455.30px;top:734.10px;font-size:13.5px;line-height:13.5px;font-weight:700;transform:scaleX(0.8607);transform-origin:0 0;color:#1890ff;">Bacon YKgp</div>
<div class="b" style="left:621px;top:732.0999999999999px;width:30.2px;height:18.5px;background:#e6f4ff;border:1px solid #91caff;border-radius:3px;box-sizing:border-box;"></div>
<div class="t" style="left:627.40px;top:736.60px;font-size:11px;line-height:11px;transform:scaleX(0.7636);transform-origin:0 0;color:#0958d9;">YES</div>
<div class="b" style="left:746px;top:732.0999999999999px;width:54.7px;height:18.5px;background:#f6ffed;border:1px solid #b7eb8f;border-radius:3px;box-sizing:border-box;"></div>
<div class="t" style="left:752.30px;top:736.60px;font-size:11px;line-height:11px;transform:scaleX(0.8176);transform-origin:0 0;color:#389e0d;">ENABLED</div>
<div class="b" style="left:871px;top:727.0999999999999px;width:50px;height:28px;background:#fff5ec;border-radius:6px;"></div>
<div class="t" style="left:892.39px;top:734.90px;font-size:13px;line-height:13px;font-weight:700;color:#fa8c16;">5</div>
<div class="t" style="left:995.50px;top:735.30px;font-size:12px;line-height:12px;color:#262626;">-</div>
<div class="b" style="left:1120.5px;top:726.9px;width:98px;height:29.4px;background:#f2faed;border-radius:6px;"></div>
<div class="t" style="left:1161.19px;top:734.90px;font-size:13px;line-height:13px;font-weight:700;transform:scaleX(1.0323);transform-origin:0 0;color:#1f1f1f;">€613.00</div>
<div class="b" style="left:1245.5px;top:726.9px;width:97.7px;height:29.4px;background:#f2faed;border-radius:6px;"></div>
<div class="t" style="left:1286.39px;top:734.90px;font-size:13px;line-height:13px;font-weight:700;transform:scaleX(1.0323);transform-origin:0 0;color:#1f1f1f;">€889.00</div>
<div class="t" style="left:1370.40px;top:735.60px;font-size:12.3px;line-height:12.3px;color:#262626;">-</div>
<div class="t" style="left:1495.50px;top:735.30px;font-size:12px;line-height:12px;color:#262626;">-</div>
<div class="t" style="left:1620.50px;top:735.30px;font-size:12px;line-height:12px;color:#262626;">-</div>
<div class="b" style="left:346.25px;top:792.0px;width:13px;height:13px;border:1px solid #e3e3e3;border-radius:2px;box-sizing:border-box;background:#fff;"></div>
<div class="b" style="left:412.5px;top:783.1px;width:24px;height:24px;background:#efefef;border-radius:50%;"></div>
<svg class="i" style="left:418.5px;top:788.3000000000001px;" width="12" height="13" viewBox="0 0 12 13"><rect x="1" y="4" width="10" height="8.2" fill="none" stroke="#8c8c8c" stroke-width="1.1"/><path d="M3.6 4 V2.8 Q3.6 0.8 6 0.8 Q8.4 0.8 8.4 2.8 V4" fill="none" stroke="#8c8c8c" stroke-width="1.1"/><path d="M3.6 5.6 V6.4 M8.4 5.6 V6.4" stroke="#8c8c8c" stroke-width="1"/></svg>
<div class="b" style="left:442.5px;top:780.4px;width:84.73910000000001px;height:29.5px;background:#f1f7ff;border-radius:6px;"></div>
<div class="t" style="left:455.30px;top:787.90px;font-size:13.5px;line-height:13.5px;font-weight:700;transform:scaleX(0.8607);transform-origin:0 0;color:#1890ff;">Bacon a5ti</div>
<div class="b" style="left:621px;top:789.3px;width:28.2px;height:18.5px;background:#fff0f6;border:1px solid #ffadd2;border-radius:3px;box-sizing:border-box;"></div>
<div class="t" style="left:627.50px;top:793.80px;font-size:11px;line-height:11px;transform:scaleX(0.8182);transform-origin:0 0;color:#c41d7f;">NO</div>
<div class="b" style="left:746px;top:789.3px;width:54.7px;height:18.5px;background:#f6ffed;border:1px solid #b7eb8f;border-radius:3px;box-sizing:border-box;"></div>
<div class="t" style="left:752.30px;top:793.80px;font-size:11px;line-height:11px;transform:scaleX(0.8176);transform-origin:0 0;color:#389e0d;">ENABLED</div>
<div class="b" style="left:871px;top:784.3px;width:50px;height:28px;background:#f0f9ea;border-radius:6px;"></div>
<div class="t" style="left:889.01px;top:792.10px;font-size:13px;line-height:13px;font-weight:700;transform:scaleX(0.9692);transform-origin:0 0;color:#52c41a;">52</div>
<div class="t" style="left:995.50px;top:792.50px;font-size:12px;line-height:12px;color:#262626;">-</div>
<div class="b" style="left:1120.5px;top:784.1px;width:98px;height:29.4px;background:#f2faed;border-radius:6px;"></div>
<div class="t" style="left:1161.19px;top:792.10px;font-size:13px;line-height:13px;font-weight:700;transform:scaleX(1.0323);transform-origin:0 0;color:#1f1f1f;">€870.00</div>
<div class="b" style="left:1245.5px;top:784.1px;width:97.7px;height:29.4px;background:#f2faed;border-radius:6px;"></div>
<div class="t" style="left:1275.18px;top:792.10px;font-size:13px;line-height:13px;font-weight:700;transform:scaleX(1.0323);transform-origin:0 0;color:#1f1f1f;">€1,645.00</div>
<div class="t" style="left:1370.40px;top:792.80px;font-size:12.3px;line-height:12.3px;transform:scaleX(0.9350);transform-origin:0 0;color:#262626;">2942</div>
<div class="t" style="left:1495.20px;top:783.80px;font-size:12.3px;line-height:12.3px;transform:scaleX(0.9527);transform-origin:0 0;color:#262626;">978-0-8321-2636-</div>
<div class="t" style="left:1495.20px;top:801.80px;font-size:12.3px;line-height:12.3px;color:#262626;">9</div>
<div class="t" style="left:1620.50px;top:792.50px;font-size:12px;line-height:12px;color:#262626;">-</div>
<div class="b" style="left:346.25px;top:849.9px;width:13px;height:13px;border:1px solid #e3e3e3;border-radius:2px;box-sizing:border-box;background:#fff;"></div>
<div class="b" style="left:412.5px;top:844.4px;width:24px;height:24px;background:#efefef;border-radius:50%;"></div>
<svg class="i" style="left:418.5px;top:849.6px;" width="12" height="13" viewBox="0 0 12 13"><rect x="1" y="4" width="10" height="8.2" fill="none" stroke="#8c8c8c" stroke-width="1.1"/><path d="M3.6 4 V2.8 Q3.6 0.8 6 0.8 Q8.4 0.8 8.4 2.8 V4" fill="none" stroke="#8c8c8c" stroke-width="1.1"/><path d="M3.6 5.6 V6.4 M8.4 5.6 V6.4" stroke="#8c8c8c" stroke-width="1"/></svg>
<div class="b" style="left:442.5px;top:841.6999999999999px;width:95.19709999999999px;height:29.5px;background:#f1f7ff;border-radius:6px;"></div>
<div class="t" style="left:455.30px;top:849.20px;font-size:13.5px;line-height:13.5px;font-weight:700;transform:scaleX(0.8607);transform-origin:0 0;color:#1890ff;">Bacon xQBa</div>
<div class="b" style="left:621px;top:847.1999999999999px;width:30.2px;height:18.5px;background:#e6f4ff;border:1px solid #91caff;border-radius:3px;box-sizing:border-box;"></div>
<div class="t" style="left:627.40px;top:851.70px;font-size:11px;line-height:11px;transform:scaleX(0.7636);transform-origin:0 0;color:#0958d9;">YES</div>
<div class="b" style="left:746px;top:847.1999999999999px;width:54.7px;height:18.5px;background:#f6ffed;border:1px solid #b7eb8f;border-radius:3px;box-sizing:border-box;"></div>
<div class="t" style="left:752.30px;top:851.70px;font-size:11px;line-height:11px;transform:scaleX(0.8176);transform-origin:0 0;color:#389e0d;">ENABLED</div>
<div class="b" style="left:871px;top:842.1999999999999px;width:50px;height:28px;background:#f0f9ea;border-radius:6px;"></div>
<div class="t" style="left:889.01px;top:850.00px;font-size:13px;line-height:13px;font-weight:700;transform:scaleX(0.9692);transform-origin:0 0;color:#52c41a;">19</div>
<div class="t" style="left:995.50px;top:850.40px;font-size:12px;line-height:12px;color:#262626;">-</div>
<div class="b" style="left:1120.5px;top:842.0px;width:98px;height:29.4px;background:#f2faed;border-radius:6px;"></div>
<div class="t" style="left:1161.19px;top:850.00px;font-size:13px;line-height:13px;font-weight:700;transform:scaleX(1.0323);transform-origin:0 0;color:#1f1f1f;">€510.00</div>
<div class="b" style="left:1245.5px;top:842.0px;width:97.7px;height:29.4px;background:#f2faed;border-radius:6px;"></div>
<div class="t" style="left:1286.39px;top:850.00px;font-size:13px;line-height:13px;font-weight:700;transform:scaleX(1.0323);transform-origin:0 0;color:#1f1f1f;">€825.00</div>
<div class="t" style="left:1370.40px;top:850.70px;font-size:12.3px;line-height:12.3px;transform:scaleX(0.9350);transform-origin:0 0;color:#262626;">3943</div>
<div class="t" style="left:1495.50px;top:850.40px;font-size:12px;line-height:12px;color:#262626;">-</div>
<div class="t" style="left:1620.50px;top:850.40px;font-size:12px;line-height:12px;color:#262626;">-</div>
<div class="b" style="left:346.25px;top:904.2px;width:13px;height:13px;border:1px solid #e3e3e3;border-radius:2px;box-sizing:border-box;background:#fff;"></div>
<div class="b" style="left:412.5px;top:898.7px;width:24px;height:24px;background:#efefef;border-radius:50%;"></div>
<svg class="i" style="left:418.5px;top:903.9000000000001px;" width="12" height="13" viewBox="0 0 12 13"><rect x="1" y="4" width="10" height="8.2" fill="none" stroke="#8c8c8c" stroke-width="1.1"/><path d="M3.6 4 V2.8 Q3.6 0.8 6 0.8 Q8.4 0.8 8.4 2.8 V4" fill="none" stroke="#8c8c8c" stroke-width="1.1"/><path d="M3.6 5.6 V6.4 M8.4 5.6 V6.4" stroke="#8c8c8c" stroke-width="1"/></svg>
<div class="b" style="left:442.5px;top:896.0px;width:47.3227px;height:29.5px;background:#f1f7ff;border-radius:6px;"></div>
<div class="t" style="left:455.30px;top:903.50px;font-size:13.5px;line-height:13.5px;font-weight:700;transform:scaleX(0.8607);transform-origin:0 0;color:#1890ff;">Ball</div>
<div class="b" style="left:621px;top:901.5px;width:28.2px;height:18.5px;background:#fff0f6;border:1px solid #ffadd2;border-radius:3px;box-sizing:border-box;"></div>
<div class="t" style="left:627.50px;top:906.00px;font-size:11px;line-height:11px;transform:scaleX(0.8182);transform-origin:0 0;color:#c41d7f;">NO</div>
<div class="b" style="left:746px;top:901.5px;width:54.7px;height:18.5px;background:#f6ffed;border:1px solid #b7eb8f;border-radius:3px;box-sizing:border-box;"></div>
<div class="t" style="left:752.30px;top:906.00px;font-size:11px;line-height:11px;transform:scaleX(0.8176);transform-origin:0 0;color:#389e0d;">ENABLED</div>
<div class="b" style="left:871px;top:896.5px;width:50px;height:28px;background:#f0f9ea;border-radius:6px;"></div>
<div class="t" style="left:889.01px;top:904.30px;font-size:13px;line-height:13px;font-weight:700;transform:scaleX(0.9692);transform-origin:0 0;color:#52c41a;">75</div>
<div class="t" style="left:995.50px;top:904.70px;font-size:12px;line-height:12px;color:#262626;">-</div>
<div class="b" style="left:1120.5px;top:896.3000000000001px;width:98px;height:29.4px;background:#f2faed;border-radius:6px;"></div>
<div class="t" style="left:1161.19px;top:904.30px;font-size:13px;line-height:13px;font-weight:700;transform:scaleX(1.0323);transform-origin:0 0;color:#1f1f1f;">€256.00</div>
<div class="b" style="left:1245.5px;top:896.3000000000001px;width:97.7px;height:29.4px;background:#f2faed;border-radius:6px;"></div>
<div class="t" style="left:1286.39px;top:904.30px;font-size:13px;line-height:13px;font-weight:700;transform:scaleX(1.0323);transform-origin:0 0;color:#1f1f1f;">€458.00</div>
<div class="t" style="left:1370.40px;top:905.00px;font-size:12.3px;line-height:12.3px;transform:scaleX(0.9350);transform-origin:0 0;color:#262626;">4144</div>
<div class="t" style="left:1495.50px;top:904.70px;font-size:12px;line-height:12px;color:#262626;">-</div>
<div class="t" style="left:1620.50px;top:904.70px;font-size:12px;line-height:12px;color:#262626;">-</div>
<div class="b" style="left:346.25px;top:961.0px;width:13px;height:13px;border:1px solid #e3e3e3;border-radius:2px;box-sizing:border-box;background:#fff;"></div>
<div class="b" style="left:412.5px;top:952.5px;width:24px;height:24px;background:#efefef;border-radius:50%;"></div>
<svg class="i" style="left:418.5px;top:957.7px;" width="12" height="13" viewBox="0 0 12 13"><rect x="1" y="4" width="10" height="8.2" fill="none" stroke="#8c8c8c" stroke-width="1.1"/><path d="M3.6 4 V2.8 Q3.6 0.8 6 0.8 Q8.4 0.8 8.4 2.8 V4" fill="none" stroke="#8c8c8c" stroke-width="1.1"/><path d="M3.6 5.6 V6.4 M8.4 5.6 V6.4" stroke="#8c8c8c" stroke-width="1"/></svg>
<div class="b" style="left:442.5px;top:949.8px;width:80.9045px;height:29.5px;background:#f1f7ff;border-radius:6px;"></div>
<div class="t" style="left:455.30px;top:957.30px;font-size:13.5px;line-height:13.5px;font-weight:700;transform:scaleX(0.8607);transform-origin:0 0;color:#1890ff;">Ball D2yQ</div>
<div class="b" style="left:621px;top:958.3px;width:28.2px;height:18.5px;background:#fff0f6;border:1px solid #ffadd2;border-radius:3px;box-sizing:border-box;"></div>
<div class="t" style="left:627.50px;top:962.80px;font-size:11px;line-height:11px;transform:scaleX(0.8182);transform-origin:0 0;color:#c41d7f;">NO</div>
<div class="b" style="left:746px;top:958.3px;width:54.7px;height:18.5px;background:#f6ffed;border:1px solid #b7eb8f;border-radius:3px;box-sizing:border-box;"></div>
<div class="t" style="left:752.30px;top:962.80px;font-size:11px;line-height:11px;transform:scaleX(0.8176);transform-origin:0 0;color:#389e0d;">ENABLED</div>
<div class="b" style="left:871px;top:953.3px;width:50px;height:28px;background:#f0f9ea;border-radius:6px;"></div>
<div class="t" style="left:889.01px;top:961.10px;font-size:13px;line-height:13px;font-weight:700;transform:scaleX(0.9692);transform-origin:0 0;color:#52c41a;">84</div>
<div class="t" style="left:995.50px;top:961.50px;font-size:12px;line-height:12px;color:#262626;">-</div>
<div class="b" style="left:1120.5px;top:953.1px;width:98px;height:29.4px;background:#f2faed;border-radius:6px;"></div>
<div class="t" style="left:1161.19px;top:961.10px;font-size:13px;line-height:13px;font-weight:700;transform:scaleX(1.0323);transform-origin:0 0;color:#1f1f1f;">€392.00</div>
<div class="b" style="left:1245.5px;top:953.1px;width:97.7px;height:29.4px;background:#f2faed;border-radius:6px;"></div>
<div class="t" style="left:1286.39px;top:961.10px;font-size:13px;line-height:13px;font-weight:700;transform:scaleX(1.0323);transform-origin:0 0;color:#1f1f1f;">€623.00</div>
<div class="t" style="left:1370.40px;top:961.80px;font-size:12.3px;line-height:12.3px;transform:scaleX(0.9350);transform-origin:0 0;color:#262626;">6784</div>
<div class="t" style="left:1495.20px;top:952.80px;font-size:12.3px;line-height:12.3px;transform:scaleX(0.9527);transform-origin:0 0;color:#262626;">978-1-0801-0148-</div>
<div class="t" style="left:1495.20px;top:970.80px;font-size:12.3px;line-height:12.3px;color:#262626;">1</div>
<div class="t" style="left:1620.50px;top:961.50px;font-size:12px;line-height:12px;color:#262626;">-</div>
<svg class="i" style="left:1371px;top:1007px;" width="7" height="11" viewBox="0 0 7 11"><path d="M6 1 L1.5 5.5 L6 10" fill="none" stroke="#bfbfbf" stroke-width="1.1"/></svg>
<div class="b" style="left:1385px;top:1003px;width:20px;height:20px;border:1px solid #7fbcff;border-radius:3px;box-sizing:border-box;"></div>
<div class="t" style="left:1391.45px;top:1007.00px;font-size:12.8px;line-height:12.8px;color:#1890ff;">1</div>
<div class="t" style="left:1410.85px;top:1007.00px;font-size:12.8px;line-height:12.8px;color:#262626;">2</div>
<div class="t" style="left:1430.95px;top:1007.00px;font-size:12.8px;line-height:12.8px;color:#262626;">3</div>
<div class="t" style="left:1451.05px;top:1007.00px;font-size:12.8px;line-height:12.8px;color:#262626;">4</div>
<div class="t" style="left:1470.75px;top:1007.00px;font-size:12.8px;line-height:12.8px;color:#262626;">5</div>
<div class="t" style="left:1517.40px;top:1007.00px;font-size:12.8px;line-height:12.8px;color:#262626;">20</div>
<svg class="i" style="left:1491px;top:1011px;" width="15" height="3" viewBox="0 0 15 3"><circle cx="1.4" cy="1.5" r="1.25" fill="#c4c4c4"/><circle cx="6.9" cy="1.5" r="1.25" fill="#c4c4c4"/><circle cx="12.4" cy="1.5" r="1.25" fill="#c4c4c4"/></svg>
<svg class="i" style="left:1545px;top:1007.5px;" width="7" height="11" viewBox="0 0 7 11"><path d="M1 1 L5.5 5.5 L1 10" fill="none" stroke="#333" stroke-width="1"/></svg>
<div class="b" style="left:1559.5px;top:1002.5px;width:80px;height:30px;border:1px solid #e3e3e3;border-radius:5px;box-sizing:border-box;background:#fff;"></div>
<div class="t" style="left:1566.50px;top:1006.70px;font-size:12.8px;line-height:12.8px;transform:scaleX(0.9218);transform-origin:0 0;color:#262626;">10 / page</div>
<svg class="i" style="left:1622px;top:1014px;" width="8" height="7" viewBox="0 0 8 7"><path d="M0.8 1 L4 5 L7.2 1" fill="none" stroke="#bfbfbf" stroke-width="1"/></svg>
<div class="b" style="left:1666.2px;top:954.2px;width:33.5px;height:33.5px;background:linear-gradient(160deg,#1890ff,#0d6ad6);border-radius:50%;box-shadow:0 3px 8px rgba(0,0,0,0.15);"></div>
<svg class="i" style="left:1676.5px;top:963px;" width="13" height="15" viewBox="0 0 13 15"><path d="M6.5 2.5 V12.8 M1.8 8 L6.5 12.8 L11.2 8" fill="none" stroke="#fff" stroke-width="1.6"/></svg>
<div class="b" style="left:1661.3px;top:1007px;width:42px;height:42px;background:#1890ff;border-radius:50%;box-shadow:0 4px 10px rgba(0,0,0,0.15);"></div>
<svg class="i" style="left:1673px;top:1019px;" width="18" height="18" viewBox="0 0 18 18"><rect x="1" y="1" width="16" height="16" fill="none" stroke="#fff" stroke-width="1.6"/><path d="M3.5 6 H7.5 M5.5 4 V8 M10.5 6 H14.5 M4 11 L7 14 M7 11 L4 14 M10.5 11.2 H14.5 M10.5 13.8 H14.5" stroke="#fff" stroke-width="1.4"/></svg>
<div class="b" style="left:0px;top:62px;width:259px;height:1004px;background:#001629;"></div>
<div class="b" style="left:0px;top:62px;width:259px;height:54px;background:linear-gradient(100deg,#011931 0%,#011f3c 55%,#03254a 100%);border-bottom:1px solid #132b47;box-sizing:border-box;"></div>
<div class="b" style="left:0px;top:62px;width:1px;height:1004px;background:#34506b;"></div>
<svg class="i" style="left:55px;top:81px;" width="15" height="15" viewBox="0 0 15 15"><rect x="0.9" y="0.9" width="13.2" height="13.2" fill="none" stroke="#fff" stroke-width="1.8"/><rect x="3.6" y="6.5" width="1.8" height="5.5" fill="#fff"/><rect x="6.6" y="4" width="1.8" height="8" fill="#fff"/><rect x="9.6" y="7.5" width="1.8" height="4.5" fill="#fff"/></svg>
<div class="t" style="left:80.60px;top:79.00px;font-size:20.6px;line-height:20.6px;font-weight:700;transform:scaleX(1.0980);transform-origin:0 0;color:#ffffff;">X-Inventory</div>
<svg class="i" style="left:26px;top:142px;" width="15" height="15" viewBox="0 0 15 15"><path d="M6.5 2.2 A5.6 5.6 0 1 0 12.3 8.6 H6.5 Z" fill="none" stroke="#a9b0b9" stroke-width="1.2"/><path d="M8.3 0.9 A5.2 5.2 0 0 1 13.6 6.4 H8.3 Z" fill="none" stroke="#a9b0b9" stroke-width="1.2"/></svg>
<div class="t" style="left:58.50px;top:143.00px;font-size:13px;line-height:13px;transform:scaleX(0.9056);transform-origin:0 0;color:#a9b0b9;">Executive Dashboard</div>
<div class="b" style="left:55px;top:179px;width:160px;height:1px;background:linear-gradient(90deg,rgba(255,255,255,0),rgba(255,255,255,0.05),rgba(255,255,255,0));"></div>
<div class="b" style="left:7px;top:193px;width:245px;height:34px;background:#0e1e33;border-radius:6px;"></div>
<svg class="i" style="left:26.8px;top:205px;" width="13" height="10" viewBox="0 0 13 10"><path d="M0.6 0.8 H5 Q6.5 0.8 6.5 2 Q6.5 0.8 8 0.8 H12.4 V8.6 H8 Q6.5 8.6 6.5 9.5 Q6.5 8.6 5 8.6 H0.6 Z M6.5 2 V9.3" fill="none" stroke="#dfe3e8" stroke-width="1"/><path d="M2.2 3.4 H4.8 M2.2 5.6 H4.8 M8.2 3.4 H10.8 M8.2 5.6 H10.8" stroke="#dfe3e8" stroke-width="0.9"/></svg>
<div class="t" style="left:46.80px;top:203.60px;font-size:12.8px;line-height:12.8px;transform:scaleX(0.9485);transform-origin:0 0;color:#eef0f3;">Inventory Management</div>
<svg class="i" style="left:228px;top:207px;" width="9" height="7" viewBox="0 0 9 7"><path d="M1 5.5 L4.5 2 L8 5.5" fill="none" stroke="#e6e9ee" stroke-width="1.6"/></svg>
<div class="b" style="left:7px;top:230px;width:245px;height:107px;background:#020e1d;border-radius:6px;"></div>
<div class="b" style="left:7px;top:237px;width:245px;height:30px;background:linear-gradient(90deg,#1a78dc 0%,#1368c0 50%,#0f60ae 100%);border-radius:6px;box-shadow:0 1px 4px rgba(0,0,0,0.35),inset 0 1px 0 rgba(255,255,255,0.08);"></div>
<div class="b" style="left:7px;top:239px;width:2.5px;height:26px;background:#ffffff;border-radius:2px 0 0 2px;"></div>
<div class="t" style="left:46.80px;top:247.20px;font-size:11.5px;line-height:11.5px;transform:scaleX(0.9822);transform-origin:0 0;color:#ffffff;">Inventory Products</div>
<div class="t" style="left:46.80px;top:278.30px;font-size:12px;line-height:12px;transform:scaleX(0.9543);transform-origin:0 0;color:#c4c9d0;">Inventory Level Adjustments</div>
<div class="t" style="left:46.80px;top:310.30px;font-size:12px;line-height:12px;transform:scaleX(0.9256);transform-origin:0 0;color:#c4c9d0;">Demand Forecasting Analytics</div>
<div class="b" style="left:55px;top:353px;width:160px;height:1px;background:linear-gradient(90deg,rgba(255,255,255,0),rgba(255,255,255,0.05),rgba(255,255,255,0));"></div>
<svg class="i" style="left:27px;top:378.1px;" width="12" height="12" viewBox="0 0 12 12"><path d="M0.5 1.3 H2.5 L4 8.3 H10.3 L11.3 3.3 H3" fill="none" stroke="#c9ced5" stroke-width="1.1"/><circle cx="4.8" cy="10.6" r="0.9" fill="#c9ced5"/><circle cx="9.4" cy="10.6" r="0.9" fill="#c9ced5"/></svg>
<div class="t" style="left:46.80px;top:378.20px;font-size:13px;line-height:13px;transform:scaleX(0.8976);transform-origin:0 0;color:#c9ced5;">Sales Operations</div>
<svg class="i" style="left:228px;top:381.6px;" width="9" height="6" viewBox="0 0 9 6"><path d="M1 1 L4.5 4.5 L8 1" fill="none" stroke="#c9ced5" stroke-width="1.5"/></svg>
<div class="b" style="left:7px;top:404px;width:245px;height:10px;background:#010d1b;border-radius:5px;"></div>
<div class="b" style="left:55px;top:430px;width:160px;height:1px;background:linear-gradient(90deg,rgba(255,255,255,0),rgba(255,255,255,0.05),rgba(255,255,255,0));"></div>
<svg class="i" style="left:27px;top:455.2px;" width="12" height="12" viewBox="0 0 12 12"><rect x="1" y="3.6" width="10" height="7.8" fill="none" stroke="#c9ced5" stroke-width="1.1"/><path d="M3.8 3.6 V2.4 Q3.8 0.7 6 0.7 Q8.2 0.7 8.2 2.4 V3.6" fill="none" stroke="#c9ced5" stroke-width="1.1"/></svg>
<div class="t" style="left:46.80px;top:455.30px;font-size:13px;line-height:13px;transform:scaleX(0.9039);transform-origin:0 0;color:#c9ced5;">Purchase Operations</div>
<svg class="i" style="left:228px;top:458.7px;" width="9" height="6" viewBox="0 0 9 6"><path d="M1 1 L4.5 4.5 L8 1" fill="none" stroke="#c9ced5" stroke-width="1.5"/></svg>
<div class="b" style="left:7px;top:481px;width:245px;height:10px;background:#010d1b;border-radius:5px;"></div>
<div class="b" style="left:55px;top:508px;width:160px;height:1px;background:linear-gradient(90deg,rgba(255,255,255,0),rgba(255,255,255,0.05),rgba(255,255,255,0));"></div>
<svg class="i" style="left:27px;top:532.5px;" width="11" height="13" viewBox="0 0 11 13"><path d="M0.6 0.6 H7 L10.4 4 V12.4 H0.6 Z M7 0.6 V4 H10.4" fill="none" stroke="#c9ced5" stroke-width="1.1"/><path d="M2.5 7 H6 M2.5 9.2 H5" stroke="#c9ced5" stroke-width="1"/></svg>
<div class="t" style="left:46.80px;top:532.60px;font-size:13px;line-height:13px;transform:scaleX(0.9153);transform-origin:0 0;color:#c9ced5;">Business Analytics Reports</div>
<svg class="i" style="left:228px;top:536px;" width="9" height="6" viewBox="0 0 9 6"><path d="M1 1 L4.5 4.5 L8 1" fill="none" stroke="#c9ced5" stroke-width="1.5"/></svg>
<div class="b" style="left:7px;top:559px;width:245px;height:10px;background:#010d1b;border-radius:5px;"></div>
<div class="b" style="left:55px;top:586px;width:160px;height:1px;background:linear-gradient(90deg,rgba(255,255,255,0),rgba(255,255,255,0.05),rgba(255,255,255,0));"></div>
<svg class="i" style="left:27px;top:610.5px;" width="13" height="13" viewBox="0 0 13 13"><circle cx="6.5" cy="4" r="3.2" fill="none" stroke="#c9ced5" stroke-width="1.1"/><path d="M1 12.5 Q1.3 7.6 6.5 7.6 Q11.7 7.6 12 12.5" fill="none" stroke="#c9ced5" stroke-width="1.1"/></svg>
<div class="t" style="left:58.40px;top:610.60px;font-size:12.8px;line-height:12.8px;transform:scaleX(0.9092);transform-origin:0 0;color:#c9ced5;">Users and Roles</div>
<div class="b" style="left:55px;top:646px;width:160px;height:1px;background:linear-gradient(90deg,rgba(255,255,255,0),rgba(255,255,255,0.05),rgba(255,255,255,0));"></div>
<svg class="i" style="left:26.5px;top:669.2px;" width="14" height="13" viewBox="0 0 14 13"><path d="M12.8 0.8 V12 L4.8 9 H1 V4 H4.8 Z M4.8 4 V9 M3 9 L4.2 12.2" fill="none" stroke="#c9ced5" stroke-width="1.1" stroke-linejoin="round"/></svg>
<div class="t" style="left:58.40px;top:670.80px;font-size:12.8px;line-height:12.8px;transform:scaleX(0.9234);transform-origin:0 0;color:#c9ced5;">Announcements</div>
<div class="b" style="left:55px;top:707px;width:160px;height:1px;background:linear-gradient(90deg,rgba(255,255,255,0),rgba(255,255,255,0.05),rgba(255,255,255,0));"></div>
<svg class="i" style="left:27px;top:732.5px;" width="12" height="12" viewBox="0 0 12 12"><path d="M9.42 4.35 L11.27 4.82 L11.27 7.18 L9.42 7.65 L9.14 8.14 L9.66 9.97 L7.61 11.15 L6.28 9.79 L5.72 9.79 L4.39 11.15 L2.34 9.97 L2.86 8.14 L2.58 7.65 L0.73 7.18 L0.73 4.82 L2.58 4.35 L2.86 3.86 L2.34 2.03 L4.39 0.85 L5.72 2.21 L6.28 2.21 L7.61 0.85 L9.66 2.03 L9.14 3.86Z" fill="none" stroke="#c9ced5" stroke-width="1.1" stroke-linejoin="round"/><circle cx="6.0" cy="6.0" r="2.04" fill="none" stroke="#c9ced5" stroke-width="1.1"/></svg>
<div class="t" style="left:46.70px;top:732.70px;font-size:12.8px;line-height:12.8px;transform:scaleX(0.9398);transform-origin:0 0;color:#c9ced5;">System Configuration</div>
<svg class="i" style="left:228px;top:735.5px;" width="9" height="6" viewBox="0 0 9 6"><path d="M1 1 L4.5 4.5 L8 1" fill="none" stroke="#c9ced5" stroke-width="1.5"/></svg>
<div class="b" style="left:7px;top:757px;width:245px;height:10px;background:#010d1b;border-radius:5px;"></div>
<div class="b" style="left:1px;top:1025px;width:258px;height:41px;background:#00203f;"></div>
<svg class="i" style="left:125px;top:1040px;" width="9" height="12" viewBox="0 0 9 12"><path d="M7 1 L2 6 L7 11" fill="none" stroke="#e8ecf0" stroke-width="1.4"/></svg>
<div class="b" style="left:259px;top:62px;width:14px;height:1004px;background:linear-gradient(90deg,#cfd1d5 0%,#e4e6ea 35%,#eef0f3 100%);"></div>
<div class="b" style="left:0px;top:0px;width:1720px;height:62px;background:#fefce8;border-bottom:1px solid #fce8a6;box-sizing:border-box;"></div>
<svg class="i" style="left:20px;top:9px;" width="15" height="15" viewBox="0 0 15 15"><circle cx="7.5" cy="7.5" r="6.6" fill="none" stroke="#faad14" stroke-width="1.2"/><rect x="6.9" y="3.6" width="1.2" height="5" fill="#faad14"/><rect x="6.9" y="9.8" width="1.2" height="1.3" fill="#faad14"/></svg>
<div class="b" style="left:0px;top:46px;width:330px;height:16px;background:linear-gradient(180deg,rgba(120,100,40,0) 0%,rgba(120,100,40,0.12) 100%);-webkit-mask-image:linear-gradient(90deg,#000 0%,#000 70%,transparent 100%);mask-image:linear-gradient(90deg,#000 0%,#000 70%,transparent 100%);"></div>
<div class="t" style="left:47.90px;top:13.50px;font-size:13.8px;line-height:13.8px;font-weight:700;transform:scaleX(1.0080);transform-origin:0 0;color:#d48806;">Demo Mode</div>
<div class="t" style="left:48.30px;top:37.00px;font-size:12px;line-height:12px;transform:scaleX(0.9720);transform-origin:0 0;color:#8c6d1f;">You are currently using the application in demo mode</div>
<svg class="i" style="left:0;top:1056px" width="10" height="10"><path d="M0 0 Q0 10 10 10 H0 Z" fill="#6b5010"/></svg>
<svg class="i" style="left:1710px;top:1056px" width="10" height="10"><path d="M10 0 Q10 10 0 10 H10 Z" fill="#4a380c"/></svg>
</div></body></html>
